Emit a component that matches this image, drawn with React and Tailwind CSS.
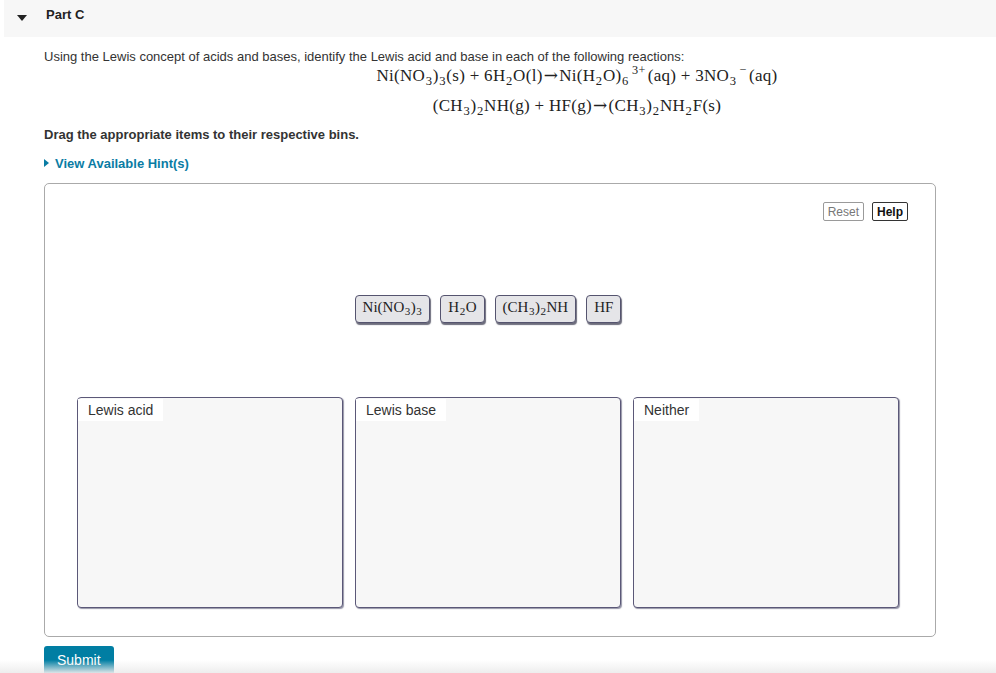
import React from "react";

const sans = { fontFamily: '"Liberation Sans", Arial, sans-serif' };
const serif = { fontFamily: '"Liberation Serif", "DejaVu Serif", serif' };

function Sub({ children }) {
  return <span className="text-[0.74em] relative top-[0.3em] mx-[0.5px]">{children}</span>;
}

function Sup({ children }) {
  return <span className="text-[0.72em] relative top-[-0.6em] ml-[3px] mr-[2px]">{children}</span>;
}

function Arrow() {
  return <span className="mx-[1px]" style={{ fontFamily: '"DejaVu Serif", serif' }}>→</span>;
}

function Item({ children }) {
  return (
    <div
      className="h-[28px] px-[7px] pb-[3px] flex items-center bg-[#e5e5e8] border border-[#55546f] rounded-[4px] shadow-[1px_2px_1px_rgba(60,60,80,0.75)] text-[15px] text-[#222]"
      style={serif}
    >
      {children}
    </div>
  );
}

function Bin({ label }) {
  return (
    <div className="w-[266px] h-[211px] bg-[#f7f7f7] border border-[#5b5878] rounded-[4px] shadow-[1px_1px_1px_rgba(80,80,110,0.6)]">
      <div className="inline-block bg-white px-[10px] h-[22px] leading-[22px] text-[14px] text-[#333]">
        {label}
      </div>
    </div>
  );
}

export default function App() {
  return (
    <div className="relative min-h-[673px] bg-white text-[#333] overflow-hidden" style={sans}>
      <div className="ml-[4px] h-[37px] bg-[#f7f7f7] flex items-center">
        <svg width="10" height="7" viewBox="0 0 10 7" className="ml-[13px]">
          <polygon points="0,0 10,0 5,6" fill="#222" />
        </svg>
        <span className="ml-[19px] text-[13px] font-bold text-[#222] -mt-[7px]">Part C</span>
      </div>

      <div className="px-[44px]">
        <p className="mt-[12px] text-[13px] leading-[15px]">
          Using the Lewis concept of acids and bases, identify the Lewis acid and base in each of the following reactions:
        </p>
        <div className="w-[892px] pl-[174px] text-center text-[17px] tracking-[0.3px] text-[#222]" style={serif}>
          <div className="h-[22px] leading-[22px] whitespace-nowrap">
            Ni(NO<Sub>3</Sub>)<Sub>3</Sub>(s) + 6H<Sub>2</Sub>O(l)<Arrow />Ni(H<Sub>2</Sub>O)<Sub>6</Sub>
            <Sup>3+</Sup>(aq) + 3NO<Sub>3</Sub>
            <Sup>−</Sup>(aq)
          </div>
          <div className="mt-[8px] h-[22px] leading-[22px] whitespace-nowrap">
            (CH<Sub>3</Sub>)<Sub>2</Sub>NH(g) + HF(g)<Arrow />(CH<Sub>3</Sub>)<Sub>2</Sub>NH<Sub>2</Sub>F(s)
          </div>
        </div>

        <p className="mt-[9px] text-[13px] font-bold text-[#333]">Drag the appropriate items to their respective bins.</p>

        <div className="mt-[9px] flex items-center text-[13px] font-bold text-[#0a7ca4]">
          <svg width="5" height="8" viewBox="0 0 5 8" className="mr-[6px]">
            <polygon points="0,0 5,4 0,8" fill="#0a7ca4" />
          </svg>
          View Available Hint(s)
        </div>

        <div className="mt-[10px] w-[892px] h-[454px] border border-[#aaaaaa] rounded-[5px] flex flex-col">
          <div className="mt-[18px] mr-[27px] flex justify-end gap-[8px] text-[12px]">
            <button className="h-[19px] px-[4px] border border-[#9a9a9a] rounded-[2px] text-[#777]">Reset</button>
            <button className="h-[19px] px-[4px] border border-[#333] rounded-[2px] text-[#111] font-bold">Help</button>
          </div>

          <div className="mt-[74px] flex justify-center gap-[10px] pr-[4px]">
            <Item>
              Ni(NO<Sub>3</Sub>)<Sub>3</Sub>
            </Item>
            <Item>
              H<Sub>2</Sub>O
            </Item>
            <Item>
              (CH<Sub>3</Sub>)<Sub>2</Sub>NH
            </Item>
            <Item>HF</Item>
          </div>

          <div className="mt-[74px] ml-[32px] flex gap-[12px]">
            <Bin label="Lewis acid" />
            <Bin label="Lewis base" />
            <Bin label="Neither" />
          </div>
        </div>

        <button className="mt-[9px] h-[28px] px-[13px] bg-[#007ea3] text-white text-[14px] rounded-t-[3px]">
          Submit
        </button>
      </div>
      <div className="absolute left-0 right-0 bottom-0 h-[14px] bg-gradient-to-b from-transparent to-[#ececec] pointer-events-none" />
    </div>
  );
}
